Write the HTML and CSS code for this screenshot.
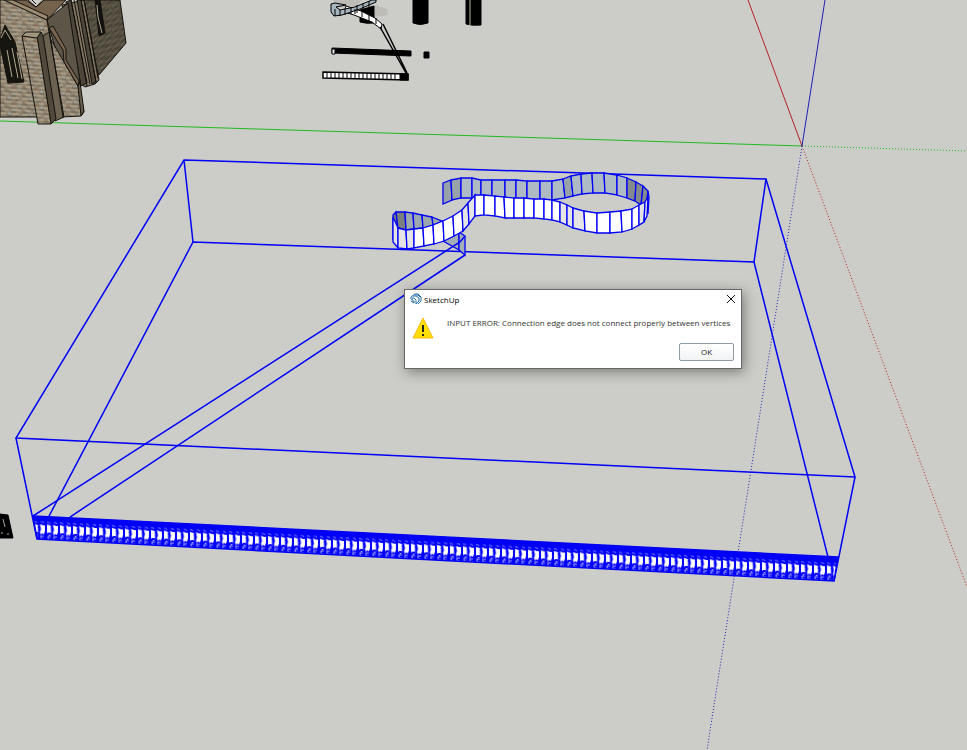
FILE: index.html
```html
<!DOCTYPE html>
<html lang="en">
<head>
  <meta charset="UTF-8">
  <meta name="viewport" content="width=device-width, initial-scale=1">
  <title>SketchUp</title>
  <link rel="stylesheet" href="styles.css">
</head>
<body>
  <main class="viewport">
    <svg class="scene" viewBox="0 0 967 750" preserveAspectRatio="xMinYMin slice" aria-hidden="true">
      <defs>
        <pattern id="stone" width="22" height="16" patternUnits="userSpaceOnUse" patternTransform="skewY(4)">
          <rect width="22" height="16" fill="#8f8472"/>
          <path d="M0 1h6M12 1h7M4 5h8M17 5h5M0 9h4M9 9h8M3 13h6M14 13h7" stroke="#a89c85" stroke-width="2"/>
          <path d="M6 3h6M15 3h4M0 7h5M11 7h6M5 11h7M18 11h4M0 15h5M11 15h5" stroke="#7a705f" stroke-width="2"/>
          <path d="M8 1h3M18 9h3M12 13h2" stroke="#a3a39b" stroke-width="2"/>
          <path d="M1 5h2M13 7h3" stroke="#a36f55" stroke-width="1"/>
        </pattern>
        <pattern id="stone-dark" width="14" height="12" patternUnits="userSpaceOnUse" patternTransform="skewY(-35)">
          <rect width="14" height="12" fill="#544e41"/>
          <path d="M0 1h5M8 4h5M2 7h5M9 10h4" stroke="#635b4a" stroke-width="2"/>
          <path d="M7 1h4M1 4h4M9 7h5M3 10h4" stroke="#464238" stroke-width="2"/>
        </pattern>
        <pattern id="balusters" x="33" y="514" width="13" height="27" patternUnits="userSpaceOnUse" patternTransform="skewY(3)">
          <rect width="13" height="27" fill="#0000fa"/>
          <path d="M1 8l4 1v9l-2 1-1-3-1 1zM7 8l3 1 2 0v6l-1 3-2-1-1 2-1-3 1-3z" fill="#fff"/>
          <path d="M5 11h2M2 17h3" stroke="#0000fa" stroke-width="2"/>
          <path d="M1 6q2-1 3 1M8 6q2-1 3 1" fill="none" stroke="#8085ff" stroke-width="1"/>
          <path d="M5 20h-3v3h3M11 20h-3v3h3" fill="none" stroke="#a9aeff" stroke-width="1"/>
        </pattern>
      </defs>

      <!-- axes -->
      <g class="axis">
        <path class="green" d="M0 121L802 146"/>
        <path class="green dotted" d="M802 146L967 151"/>
        <path class="red" d="M748 0L802 146"/>
        <path class="red dotted" d="M802 146L967 587"/>
        <path class="blue" d="M825 0L802 146"/>
        <path class="blue dotted" d="M802 146L707 750"/>
      </g>

      <!-- church -->
      <g class="church">
        <path fill="url(#stone-dark)" d="M84 0H120L126 43 99 75 93 60Z"/>
        <path fill="#817563" d="M62 5L84 0 99 80 95 84 85 87 78 82Z"/>
        <path fill="#4d463a" d="M66 2l5-2 16 83-6 3zM77 0l4 0 15 82-4 2z"/>
        <path d="M63 8L79 82M71 0L87 86M74 0L90 84M81 0L96 82M84 0L98 78"/>
        <path fill="#111" d="M95 0h5l5 33-6 3z"/>
        <path class="thin" stroke="#c5b891" d="M97 5l1 12 4 16"/>
        <path fill="url(#stone)" d="M0 0H10L47 20 63 117 0 117Z"/>
        <path fill="#75624d" d="M8 0H26L36 7 44 0H66L47 20Z"/>
        <path fill="#9a8a70" d="M4 0H13L48 16 47 20Z"/>
        <path d="M28 0l8 7 8-7M32 0l4 4"/>
        <path class="thin" stroke="#ce8a2c" d="M37 5l5-5"/>
        <path fill="#5d5547" d="M47 20L68 3 80 82 70 100Z"/>
        <path fill="url(#stone)" d="M50 38L64 62 78 86 84 112 81 116 62 117Z"/>
        <path fill="#6c6251" d="M43 36L49 32 64 117 55 121Z"/>
        <path fill="#786351" d="M49 28l4-2 13 23v11l13 21-1 5-14-24-1-12z"/>
        <path fill="#655c4c" d="M78 86l2-4 4 29-3 5z"/>
        <path d="M49 28L63 117"/>
        <path fill="#51493c" d="M37 38l4-6 2 4 13 83-5 5z"/>
        <path fill="url(#stone)" d="M22 36H37L51 124H38Z"/>
        <path fill="#a19580" d="M22 36l4-4h15l-4 6z"/>
        <path fill="#17150f" d="M0 39l5-14 10 17 9 40-16 1-8-38z"/>
        <path class="thin" stroke="#a3a18f" d="M7 50l5 27M12 48l6 30M17 52l5 27M1 38l4-8 6 10"/>
      </g>

      <!-- loose railing parts -->
      <g class="parts">
        <path fill="#bdbcb6" stroke="none" d="M333 0h28l-3 6-20 1zM375 5l12 4 1 6-14 2z"/>
        <path fill="#000" d="M360 10l14-4v17q-7 1-14-1zM413 0h15v23q-8 3-15 0zM466 0h15v25q-8 1-15-1z"/>
        <path stroke="#bbb6a0" d="M470 0v25"/>
        <path fill="#fff" d="M346 6l15 5 14 7 7 6-1 5-9-7-18-7-10-3z"/>
        <path fill="#a7b5bf" d="M331 4l4-1 11 2-10 2 4 3 15-3 17-7h4v2l-16 7-18 6-8 1-3-4z"/>
        <path d="M335 9v7M340 10v6M345 9v6M351 7v7M357 5v8M363 3v7M369 1v7M355 9v5M362 11v6M369 15v6M376 18v6"/>
        <path class="heavy" d="M380 27l26 46M383 24l24 49"/>
        <path fill="#000" d="M332 48l79 3v5l-79-3zM424 52h5v6h-5z"/>
        <path fill="#eee" d="M332 49h3v5h-3z"/>
        <path class="heavy" fill="#fff" d="M323 72l85 2v6l-85-2z"/>
        <path d="M327 72v6M331 72v6M335 72v6M339 73v6M343 73v6M347 73v6M351 73v6M355 73v6M359 73v6M363 73v6M367 73v6M371 73v6M375 74v6M379 74v6M383 74v6M387 74v6M391 74v6M395 74v6"/>
        <path fill="#000" d="M400 74h8v6h-8z"/>
        <path fill="#000" d="M0 514l8 1 5 23H0z"/>
        <path stroke="#aaa" d="M3 519l2 8M1 533h2M7 534h2"/>
      </g>

      <!-- selected group and its bounding box -->
      <g class="selected">
        <path d="M184 160L766 179 855 477 16 438Z"/>
        <path d="M37 539L193 242 754 262 834 581"/>
        <path d="M184 160L193 242M766 179L754 262M855 477L834 581M16 438L37 539"/>
        <g id="ribbon"></g>
        <path d="M33 516L460 242 465 236M70 517L465 255"/>
        <path fill="url(#balusters)" d="M33 516L838 557 834 581 37 539Z"/>
        <path class="rail" d="M34 518L837 559"/>
      </g>
    </svg>

    <section class="dialog" role="alertdialog" aria-labelledby="dialog-title" aria-describedby="dialog-text">
      <header class="titlebar">
        <svg class="logo" viewBox="0 0 12 12" aria-hidden="true">
          <path d="M1 4L5 1h3l3 3v4L8 11M1 4v2l2 1v2M3 3l3 0 3 2v3L6 11V7L4 5H2M5 2h3l2 2M1 8l3 2V8"/>
        </svg>
        <h1 id="dialog-title">SketchUp</h1>
        <button class="close" type="button" aria-label="Close">
          <svg viewBox="0 0 8 8" aria-hidden="true"><path d="M0 0l8 8M8 0L0 8"/></svg>
        </button>
      </header>
      <div class="message">
        <svg class="warning" viewBox="0 0 22 22" aria-hidden="true">
          <path fill="#ffde00" stroke="#fbb917" d="M11 1L21 21H1Z"/>
          <path fill="#222" d="M10 8h2v7h-2zM10 17h2v2h-2z"/>
        </svg>
        <p id="dialog-text">INPUT ERROR: Connection edge does not connect properly between vertices</p>
      </div>
      <div class="actions">
        <button class="ok" type="button">OK</button>
      </div>
    </section>
  </main>

  <script>
    const ribbon = document.getElementById('ribbon');

    // each panel edge: [top x, top y, bottom x, bottom y]
    const loop = [
      [393,215,393,240],[396,212,398,228],[405,212,406,230],[413,213,414,229],
      [422,215,423,228],[432,217,433,225],[442,221,443,221]
    ];
    const back = [
      [443,183,443,204],[451,180,452,200],[461,178,461,198],[472,178,472,198],
      [481,180,481,198],[492,180,492,199],[505,180,505,199],[516,180,516,199],
      [527,181,527,200],[540,181,540,200],[552,181,552,200],[563,179,565,198],
      [571,176,573,196],[581,174,582,194],[592,173,593,193],[604,173,605,193],
      [617,175,617,195],[627,178,627,198],[636,182,635,201],[643,186,641,205],
      [648,191,646,208],[649,197,648,214]
    ];
    const front = [
      [393,217,393,242],[398,228,398,248],[406,230,407,249],[414,229,414,248],
      [423,228,424,246],[433,225,434,244],[443,221,444,241],[453,216,454,236],
      [462,210,463,231],[468,203,469,224],[475,195,475,216],[484,195,484,215],
      [495,196,495,216],[504,197,505,218],[514,198,514,218],[524,198,524,218],
      [534,199,534,218],[544,199,544,219],[552,200,552,220],[560,202,560,222],
      [567,205,567,225],[573,208,573,228],[584,211,585,231],[597,213,597,233],
      [610,212,610,233],[621,211,622,232],[632,209,632,229],[639,205,639,225],
      [645,202,644,222],[648,197,647,216]
    ];
    const tail = [[443,241,443,241],[459,232,459,250],[465,236,465,255]];

    function drawStrip(edges, color) {
      for (let i = 0; i < edges.length - 1; i++) {
        const a = edges[i];
        const b = edges[i + 1];
        const panel = document.createElementNS('http://www.w3.org/2000/svg', 'path');
        panel.setAttribute('d', `M${a[0]} ${a[1]}L${b[0]} ${b[1]} ${b[2]} ${b[3]} ${a[2]} ${a[3]}Z`);
        panel.setAttribute('fill', color(i));
        ribbon.appendChild(panel);
      }
    }

    drawStrip(tail, () => '#a3adb5');
    drawStrip(loop, i => i < 2 ? '#7b807f' : '#9ca7ae');
    drawStrip(back, i => i > 16 ? '#83898d' : i < 2 || i === 11 ? '#98a3a9' : '#aebbc4');
    drawStrip(front, i => i < 3 || (i > 7 && i < 10) || (i > 18 && i < 22) || i > 26 ? '#e4e4e4' : '#fff');
  </script>
</body>
</html>
```
FILE: styles.css
```css
body {
  margin: 0;
  font-family: 'Open Sans', 'Noto Sans', sans-serif;
  background-color: #cccdc8;
}

.viewport {
  position: relative;
  min-height: 100vh;
  overflow: hidden;
}

.scene {
  display: block;
  width: 100%;
  height: 100vh;
}

.axis path {
  fill: none;
  stroke-width: 1;
}

.axis .green {
  stroke: #22b822;
}

.axis .red {
  stroke: #b52025;
}

.axis .blue {
  stroke: #2020b5;
}

.axis .dotted {
  stroke-dasharray: 1 2;
}

.church path {
  stroke: #15120d;
  stroke-width: 1;
}

.church path:not([fill]) {
  fill: none;
}

.church .thin {
  stroke: #b3a98f;
}

.parts path:not([stroke]) {
  stroke: #000;
}

.parts path:not([fill]) {
  fill: none;
}

.parts .heavy {
  stroke-width: 1.5;
}

.selected path {
  stroke: #0000f5;
  stroke-width: 1.5;
}

.selected path:not([fill]) {
  fill: none;
}

#ribbon path {
  stroke-width: 1.3;
}

.selected .rail {
  stroke-width: 4;
}

/* dialog window, floats over the model */
.dialog {
  position: absolute;
  top: 289px;
  left: 404px;
  box-sizing: border-box;
  width: 338px;
  border: 1px solid #686868;
  background-color: #fff;
  box-shadow: 2px 3px 12px rgba(0, 0, 0, 0.4);
}

.titlebar {
  display: flex;
  align-items: center;
  gap: 2px;
  height: 18px;
  padding: 0 6px 0 5px;
}

.logo {
  width: 12px;
  height: 12px;
  fill: none;
  stroke: #246fa8;
}

.titlebar h1 {
  flex: 1;
  margin: 0;
  font-size: 8px;
  font-weight: 400;
  color: #000;
}

.close {
  width: 8px;
  height: 8px;
  padding: 0;
  border: 0;
  background: none;
}

.close svg {
  display: block;
  fill: none;
  stroke: #111;
}

.message {
  display: flex;
  gap: 13px;
  padding: 9px 7px 0;
}

.warning {
  flex: none;
  width: 22px;
  height: 22px;
}

.message p {
  margin: 0;
  font-size: 8px;
  line-height: 12px;
  white-space: nowrap;
  color: #333;
}

.actions {
  display: flex;
  justify-content: flex-end;
  padding: 4px 7px 7px;
}

.ok {
  width: 55px;
  height: 18px;
  padding: 0;
  border: 1px solid #8f9ba6;
  border-radius: 2px;
  background: linear-gradient(#fff, #f1f3f4);
  font-family: inherit;
  font-size: 8px;
  line-height: 14px;
  color: #222;
}
```
